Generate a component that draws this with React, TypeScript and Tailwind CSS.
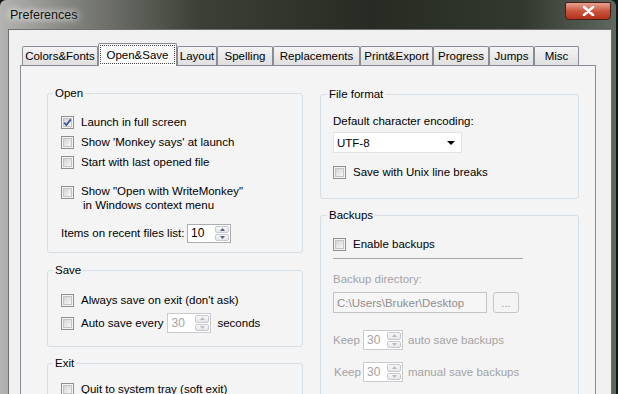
import React from "react";

const tabs: { label: string; w: string; selected?: boolean }[] = [
  { label: "Colors&Fonts", w: "w-[76px]" },
  { label: "Open&Save", w: "w-[79px]", selected: true },
  { label: "Layout", w: "w-[40px]" },
  { label: "Spelling", w: "w-[56px]" },
  { label: "Replacements", w: "w-[87px]" },
  { label: "Print&Export", w: "w-[73px]" },
  { label: "Progress", w: "w-[56px]" },
  { label: "Jumps", w: "w-[45px]" },
  { label: "Misc", w: "w-[45px]" },
];

const Check = ({ checked = false, className = "" }: { checked?: boolean; className?: string }) => (
  <span
    className={`relative flex h-[13px] w-[13px] shrink-0 items-center justify-center border border-[#8e8f8f] bg-[#f4f4f4] ${className}`}
  >
    <span className="h-[9px] w-[9px] border border-[#c4c4c4] bg-gradient-to-br from-[#d3d3d3] to-[#f8f8f8]" />
    {checked && (
      <svg className="absolute left-0 top-0" width="11" height="11" viewBox="0 0 11 11">
        <path d="M2.2 5.6 L4.4 8 L8.8 2.4" fill="none" stroke="#3b5a9a" strokeWidth="1.8" />
      </svg>
    )}
  </span>
);

const CheckRow = ({ label, checked, className = "" }: { label: string; checked?: boolean; className?: string }) => (
  <div className={`flex h-[20px] items-center gap-[7px] ${className}`}>
    <Check checked={checked} />
    <span className="whitespace-nowrap">{label}</span>
  </div>
);

const Arrow = ({ up, disabled }: { up?: boolean; disabled?: boolean }) => (
  <svg width="5" height="3" viewBox="0 0 5 3">
    <path d={up ? "M0 3 L2.5 0 L5 3 Z" : "M0 0 L2.5 3 L5 0 Z"} fill={disabled ? "#b9bcc2" : "#4d6288"} />
  </svg>
);

const Spin = ({ value, className, disabled }: { value: string; className: string; disabled?: boolean }) => (
  <div
    className={`flex shrink-0 bg-white ${disabled ? "border border-[#c9cbd0] text-[#a3a3a3]" : "border border-[#abadb3] text-black"} ${className}`}
  >
    <span className="flex flex-1 items-center pl-[3px] text-[12px]">{value}</span>
    <span className="flex w-[15px] flex-col gap-px py-px pr-px">
      <span className="flex flex-1 items-center justify-center rounded-[2px] border border-[#c6c9cf] bg-gradient-to-b from-[#f7f7f7] to-[#e6e6e6]">
        <Arrow up disabled={disabled} />
      </span>
      <span className="flex flex-1 items-center justify-center rounded-[2px] border border-[#c6c9cf] bg-gradient-to-b from-[#f7f7f7] to-[#e6e6e6]">
        <Arrow disabled={disabled} />
      </span>
    </span>
  </div>
);

export default function App() {
  return (
    <div className="h-[394px] w-[618px] overflow-hidden bg-[#0c1716] font-['Liberation_Sans',Arial,sans-serif] text-[11.5px] leading-[14px] text-black">
      <div className="flex h-full w-[616px] flex-col rounded-t-[6px] bg-[linear-gradient(90deg,#b4b4b2_0%,#80827c_12%,#3c4036_32%,#272b23_60%,#33392f_85%,#5e6860_100%)]">
        {/* title bar */}
        <div className="flex h-[29px] items-start pl-[10px] pr-[5px]">
          <span className="flex h-[29px] items-center text-[12.5px] text-[#111] [text-shadow:0_0_6px_#fff,0_0_10px_#fff]">
            Preferences
          </span>
          <div className="flex-1" />
          <div className="mt-[2px] flex h-[18px] w-[46px] items-center justify-center rounded-b-[4px] rounded-t-[2px] border border-[#4a1c12] bg-gradient-to-b from-[#e7a392] via-[#c9553c] to-[#b3321b]">
            <svg width="13" height="10" viewBox="0 0 13 10">
              <path d="M2 1 L11 9 M11 1 L2 9" stroke="#fff" strokeWidth="2.6" strokeLinecap="round" />
            </svg>
          </div>
        </div>

        {/* client */}
        <div className="flex flex-1 pl-[8px] pr-[4px]">
          <div className="flex flex-1 flex-col border border-b-0 border-[#6f6f6f] bg-[#f0f0f0] pl-[11px] pr-[15px] pt-[13px]">
            {/* tabs */}
            <div className="flex h-[22px] items-end pl-[2px]">
              {tabs.map((t) =>
                t.selected ? (
                  <div
                    key={t.label}
                    className={`relative z-10 -mb-px flex h-[23px] ${t.w} rounded-t-[2px] border border-b-0 border-[#898c95] bg-[#fbfbfb] px-[1px] pb-[2px] pt-[1px]`}
                  >
                    <div className="flex flex-1 items-center justify-center border border-dotted border-[#444]">
                      {t.label}
                    </div>
                  </div>
                ) : (
                  <div
                    key={t.label}
                    className={`flex h-[19px] ${t.w} items-center justify-center rounded-t-[2px] border border-b-0 border-[#898c95] bg-gradient-to-b from-[#f4f4f4] to-[#dfdfdf]`}
                  >
                    {t.label}
                  </div>
                )
              )}
            </div>

            {/* tab page */}
            <div className="flex flex-1 gap-[17px] border border-b-0 border-[#898c95] bg-[#f4f4f4] pl-[26px]">
              {/* left column */}
              <div className="flex w-[256px] flex-col pt-[20px]">
                <fieldset className="rounded-[3px] border border-[#d5dfe5] pb-[9px] pt-[12px]">
                  <legend className="ml-[5px] px-[2px]">Open</legend>
                  <div className="pl-[13px]">
                    <CheckRow checked label="Launch in full screen" />
                    <CheckRow label="Show 'Monkey says' at launch" />
                    <CheckRow label="Start with last opened file" />
                    <div className="mt-[12px] flex items-start gap-[7px]">
                      <Check className="mt-[2px]" />
                      <div>
                        <div>Show "Open with WriteMonkey"</div>
                        <div className="pl-[2px]">in Windows context menu</div>
                      </div>
                    </div>
                    <div className="mt-[11px] flex h-[20px] items-center">
                      <span className="w-[126px] whitespace-nowrap">Items on recent files list:</span>
                      <Spin value="10" className="h-[19px] w-[44px]" />
                    </div>
                  </div>
                </fieldset>

                <fieldset className="mt-[10px] rounded-[3px] border border-[#d5dfe5] pb-[13px] pt-[13px]">
                  <legend className="ml-[5px] px-[2px]">Save</legend>
                  <div className="pl-[13px]">
                    <CheckRow label="Always save on exit (don't ask)" />
                    <div className="mt-[3px] flex h-[20px] items-center">
                      <Check />
                      <span className="ml-[7px] whitespace-nowrap">Auto save every</span>
                      <Spin value="30" disabled className="ml-[4px] h-[20px] w-[44px]" />
                      <span className="ml-[6px]">seconds</span>
                    </div>
                  </div>
                </fieldset>

                <fieldset className="mt-[9px] rounded-[3px] border border-[#d5dfe5] pb-[13px] pt-[9px]">
                  <legend className="ml-[5px] px-[2px]">Exit</legend>
                  <div className="pl-[13px]">
                    <CheckRow label="Quit to system tray (soft exit)" />
                  </div>
                </fieldset>
              </div>

              {/* right column */}
              <div className="flex w-[259px] flex-col pt-[21px]">
                <fieldset className="rounded-[3px] border border-[#d5dfe5] pb-[16px] pt-[13px]">
                  <legend className="ml-[6px] px-[2px]">File format</legend>
                  <div className="pl-[12px]">
                    <div>Default character encoding:</div>
                    <div className="mt-[4px] flex h-[21px] w-[129px] items-center justify-between border border-[#e2e3e6] bg-white pl-[3px] pr-[6px]">
                      <span>UTF-8</span>
                      <svg width="8" height="4" viewBox="0 0 8 4">
                        <path d="M0 0 L8 0 L4 4 Z" fill="#000" />
                      </svg>
                    </div>
                    <CheckRow className="mt-[9px]" label="Save with Unix line breaks" />
                  </div>
                </fieldset>

                <fieldset className="mt-[9px] rounded-[3px] border border-[#d5dfe5] pb-[20px] pt-[12px]">
                  <legend className="ml-[6px] px-[2px]">Backups</legend>
                  <div className="pl-[12px]">
                    <CheckRow label="Enable backups" />
                    <div className="mt-[4px] h-px w-[190px] bg-[#a8a8a8]" />
                    <div className="mt-[13px] text-[#a3a3a3]">Backup directory:</div>
                    <div className="mt-[6px] flex gap-[6px]">
                      <div className="flex h-[21px] w-[154px] items-center border border-[#c2c4c9] bg-[#f6f6f6] pl-[3px] text-[#8e8e8e]">
                        C:\Users\Bruker\Desktop
                      </div>
                      <div className="flex h-[21px] w-[26px] items-start justify-center rounded-[3px] border border-[#c5c5c5] bg-[#f4f4f4] pt-[3px] text-[#9a9a9a]">
                        ...
                      </div>
                    </div>
                    <div className="mt-[17px] flex h-[20px] items-center text-[#a3a3a3]">
                      <span className="w-[30px]">Keep</span>
                      <Spin value="30" disabled className="h-[20px] w-[40px]" />
                      <span className="ml-[5px]">auto save backups</span>
                    </div>
                    <div className="mt-[12px] flex h-[20px] items-center text-[#a3a3a3]">
                      <span className="w-[30px] pl-px">Keep</span>
                      <Spin value="30" disabled className="h-[20px] w-[40px]" />
                      <span className="ml-[5px]">manual save backups</span>
                    </div>
                  </div>
                </fieldset>
              </div>
            </div>
          </div>
        </div>
      </div>
    </div>
  );
}
